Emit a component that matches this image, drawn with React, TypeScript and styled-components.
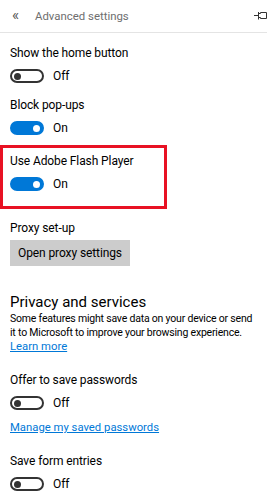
import React from "react";
import styled, { createGlobalStyle } from "styled-components";

const Global = createGlobalStyle`
  html, body { margin: 0; padding: 0; background: #fff; }
  body {
    font-family: Roboto, "Liberation Sans", sans-serif;
    color: #000;
    width: 267px;
    overflow: hidden;
  }
`;

const Header = styled.div`
  height: 32px;
  display: flex;
  align-items: center;
  border-bottom: 1px solid #e4e4e4;
  padding: 0 0 0 12px;
  color: #6e6e6e;
`;

const BackChevron = styled.span`
  font-size: 15px;
  width: 23px;
  line-height: 1;
  margin-top: -2px;
  color: #555;
`;

const HeaderTitle = styled.span`
  flex: 1;
  font-size: 11.4px;
  margin-top: -1px;
`;

const Content = styled.div`
  padding: 12px 10px 0 10px;
`;

const Setting = styled.div<{ $gap?: number }>`
  margin-top: ${(p) => p.$gap ?? 0}px;
  position: relative;
`;

const Highlighted = styled(Setting)`
  &::after {
    content: "";
    position: absolute;
    left: -10px;
    top: -8px;
    width: 161px;
    height: 58px;
    border: 3px solid #e81123;
    pointer-events: none;
  }
`;

const Label = styled.div`
  font-size: 12px;
  letter-spacing: -0.1px;
  line-height: 16px;
`;

const ToggleRow = styled.div`
  display: flex;
  align-items: center;
  height: 14px;
  margin-top: 8px;
  gap: 9px;
  font-size: 12px;
  letter-spacing: -0.1px;
`;

const Track = styled.span<{ $on: boolean }>`
  box-sizing: border-box;
  width: 34px;
  height: 14px;
  border-radius: 7px;
  border: 2px solid ${(p) => (p.$on ? "#0078d7" : "#333")};
  background: ${(p) => (p.$on ? "#0078d7" : "#fff")};
  display: flex;
  align-items: center;
  justify-content: ${(p) => (p.$on ? "flex-end" : "flex-start")};
  padding: 0 2px;
`;

const Knob = styled.span<{ $on: boolean }>`
  width: 7px;
  height: 7px;
  border-radius: 50%;
  background: ${(p) => (p.$on ? "#fff" : "#333")};
`;

const Button = styled.div`
  display: inline-flex;
  align-items: center;
  height: 26px;
  padding: 0 8px;
  background: #cccccc;
  font-size: 12px;
  letter-spacing: -0.1px;
  margin-top: 4px;
`;

const SectionTitle = styled.div`
  font-size: 15px;
  line-height: 20px;
  margin-top: 26px;
`;

const Description = styled.div`
  font-size: 10.5px;
  letter-spacing: -0.2px;
  line-height: 13.5px;
`;

const Link = styled.div<{ $gap?: number }>`
  font-size: 11.3px;
  line-height: 16px;
  color: #0078d7;
  text-decoration: underline;
  margin-top: ${(p) => p.$gap ?? 0}px;
`;

function Toggle({ on }: { on: boolean }) {
  return (
    <ToggleRow>
      <Track $on={on}>
        <Knob $on={on} />
      </Track>
      <span>{on ? "On" : "Off"}</span>
    </ToggleRow>
  );
}

function PinIcon() {
  return (
    <svg width="13" height="8" viewBox="0 0 13 8" fill="none" stroke="#333" strokeWidth="1">
      <path d="M0 3.5 H4" />
      <path d="M4.5 0 V7.5" />
      <path d="M4.5 1.5 H6.5 V0.5 H12.5 V6.5 H6.5 V5.5 H4.5" />
    </svg>
  );
}

export default function App() {
  return (
    <>
      <Global />
      <Header>
        <BackChevron>«</BackChevron>
        <HeaderTitle>Advanced settings</HeaderTitle>
        <PinIcon />
      </Header>
      <Content>
        <Setting>
          <Label>Show the home button</Label>
          <Toggle on={false} />
        </Setting>
        <Setting $gap={14}>
          <Label>Block pop-ups</Label>
          <Toggle on={true} />
        </Setting>
        <Highlighted $gap={18}>
          <Label>Use Adobe Flash Player</Label>
          <Toggle on={true} />
        </Highlighted>
        <Setting $gap={29}>
          <Label>Proxy set-up</Label>
          <Button>Open proxy settings</Button>
        </Setting>
        <SectionTitle>Privacy and services</SectionTitle>
        <Description>
          Some features might save data on your device or send it to Microsoft to improve your browsing experience.
        </Description>
        <Link>Learn more</Link>
        <Setting $gap={17}>
          <Label>Offer to save passwords</Label>
          <Toggle on={false} />
        </Setting>
        <Link $gap={10}>Manage my saved passwords</Link>
        <Setting $gap={17}>
          <Label>Save form entries</Label>
          <Toggle on={false} />
        </Setting>
      </Content>
    </>
  );
}
